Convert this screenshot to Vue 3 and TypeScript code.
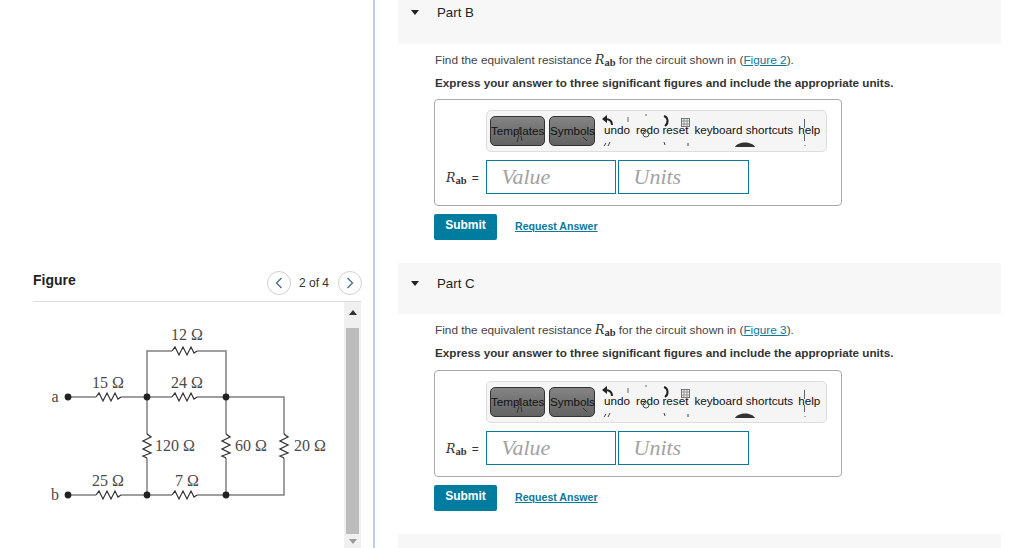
<script setup lang="ts">
interface Part {
  name: string
  figure: string
}
const parts: Part[] = [
  { name: 'Part B', figure: 'Figure 2' },
  { name: 'Part C', figure: 'Figure 3' },
]
const wires: string[] = [
  'M68 397H96M121 397H172M197 397H284V434M284 458V495H226',
  'M147 397V351H172M197 351H226V397',
  'M147 397V434M147 458V495',
  'M226 397V434M226 458V495',
  'M68 495H96M121 495H172M197 495H226',
]
const hResistors: [number, number][] = [[96, 397], [172, 397], [172, 351], [96, 495], [172, 495]]
const vResistors: [number, number][] = [[147, 434], [226, 434], [284, 434]]
const nodes: [number, number][] = [[68, 397], [147, 397], [226, 397], [68, 495], [147, 495], [226, 495]]
const labels: [string, number, number][] = [
  ['12 Ω', 187, 340], ['15 Ω', 108, 388], ['24 Ω', 187, 388],
  ['120 Ω', 175, 451], ['60 Ω', 251, 451], ['20 Ω', 310, 451],
  ['25 Ω', 108, 486], ['7 Ω', 187, 486],
]
</script>

<template>
  <div class="page">
    <aside class="left">
      <div class="figure-head">
        <strong class="figure-title">Figure</strong>
        <div class="pager">
          <button class="round"><svg width="10" height="12" viewBox="0 0 10 12"><path d="M7.5 1 2.5 6l5 5" fill="none" stroke="#4a6a8a" stroke-width="1.3" /></svg></button>
          <span class="count">2 of 4</span>
          <button class="round"><svg width="10" height="12" viewBox="0 0 10 12"><path d="M2.5 1l5 5-5 5" fill="none" stroke="#4a6a8a" stroke-width="1.3" /></svg></button>
        </div>
      </div>
      <div class="viewer">
        <svg class="circuit" width="311" height="246" viewBox="33 302 311 246">
          <path v-for="w in wires" :key="w" :d="w" fill="none" stroke="#808080" stroke-width="1.5" />
          <path v-for="r in hResistors" :key="r.join()" :transform="`translate(${r[0]} ${r[1]})`" d="M0 0 3 -4 7 4 11 -4 15 4 19 -4 22 2 25 0" fill="none" stroke="#333" stroke-width="1.2" />
          <path v-for="r in vResistors" :key="r.join()" :transform="`translate(${r[0]} ${r[1]})`" d="M0 0 4 3 -4 7 4 11 -4 15 4 19 -4 22 0 24" fill="none" stroke="#333" stroke-width="1.3" />
          <circle v-for="n in nodes" :key="n.join()" :cx="n[0]" :cy="n[1]" r="3.4" fill="#222" />
          <text v-for="l in labels" :key="l[0]" :x="l[1]" :y="l[2]" class="ctext" text-anchor="middle">{{ l[0] }}</text>
          <text x="55" y="402" class="ctext" text-anchor="middle">a</text>
          <text x="55" y="500" class="ctext" text-anchor="middle">b</text>
        </svg>
        <div class="track">
          <span class="up"></span>
          <div class="thumb"></div>
          <span class="down"></span>
        </div>
      </div>
    </aside>

    <main class="right">
      <section v-for="p in parts" :key="p.name" class="part">
        <header class="part-head">
          <span class="caret"></span>
          <span class="part-name">{{ p.name }}</span>
        </header>
        <div class="part-body">
          <p class="question">Find the equivalent resistance <span class="math"><i>R</i><sub>ab</sub></span> for the circuit shown in (<a class="flink">{{ p.figure }}</a>).</p>
          <p class="instr">Express your answer to three significant figures and include the appropriate units.</p>
          <div class="answer">
            <div class="toolbar">
              <button class="tbtn templates">Templates</button>
              <button class="tbtn symbols">Symbols</button>
              <span class="tool undo">undo</span>
              <span class="tool redo">redo</span>
              <span class="tool reset">reset</span>
              <span class="tool keys">keyboard shortcuts</span>
              <span class="tool help">help</span>
              <svg class="bits" width="341" height="42" viewBox="486 110 341 42">
                <path d="M520 127l-2 7M516 131l6 4M519 135l-2 7M521 136l1 5" fill="none" stroke="#333" stroke-width="1" />
                <path d="M583 137l4 4" fill="none" stroke="#333" stroke-width="1" />
                <path d="M612 125c0-4-2-6-7-6" fill="none" stroke="#222" stroke-width="2" />
                <path d="M602 119l5-4v8z" fill="#222" />
                <path d="M628 117v5M645 115h2" fill="none" stroke="#666" stroke-width="1" />
                <path d="M664 116c4 1 5 7 1 10" fill="none" stroke="#222" stroke-width="2" />
                <rect x="681.500" y="118.500" width="8" height="8" fill="#eee" stroke="#777" />
                <path d="M681 121h9M681 124h9M684 118v8M687 118v8" stroke="#777" stroke-width=".7" />
                <circle cx="646" cy="134" r="3" fill="none" stroke="#555" />
                <path d="M604 146l2-3M608 146l2-4" stroke="#444" fill="none" />
                <path d="M735 147c3-6 17-6 20 0z" fill="#333" />
                <path d="M664 142l1 3M688 143v3" stroke="#444" fill="none" />
                <path d="M804.500 119v9M804.500 134v7M805 145v1" stroke="#666" fill="none" />
              </svg>
            </div>
            <div class="answer-row">
              <span class="rab"><span class="math"><i>R</i><sub>ab</sub></span> =</span>
              <div class="field value">Value</div>
              <div class="field units">Units</div>
            </div>
          </div>
          <div class="actions">
            <button class="submit">Submit</button>
            <a class="request">Request Answer</a>
          </div>
        </div>
      </section>
      <div class="part-head next"></div>
    </main>
  </div>
</template>

<style>
html, body { margin: 0; background: #fff; }
</style>

<style scoped>
.page {
  display: flex;
  width: 1010px;
  height: 548px;
  overflow: hidden;
  font-family: "Liberation Sans", Arial, sans-serif;
  color: #333;
}
.left {
  width: 373px;
  height: 548px;
  border-right: 2px solid #bdd0e2;
  flex: none;
}
.figure-head {
  display: flex;
  align-items: center;
  justify-content: space-between;
  width: 328px;
  height: 36px;
  margin: 265px 0 0 33px;
  border-bottom: 1px solid #ddd;
}
.figure-title { font-size: 14px; color: #222; margin-bottom: 6px; }
.pager { display: flex; align-items: center; gap: 8px; margin-right: -1px; }
.count { font-size: 12px; color: #333; margin-right: 1px; }
.round {
  width: 24px;
  height: 24px;
  padding: 0;
  display: flex;
  align-items: center;
  justify-content: center;
  border: 1px solid #d0d0d0;
  border-radius: 50%;
  background: #fff;
}
.viewer { display: flex; width: 328px; margin-left: 33px; }
.circuit { flex: none; width: 311px; height: 246px; }
.ctext { font-family: "Liberation Serif", serif; font-size: 16px; fill: #4a4a4a; }
.track {
  width: 17px;
  height: 246px;
  flex: none;
  background: #f0f0f0;
  display: flex;
  flex-direction: column;
  align-items: center;
}
.up { margin-top: 8px; border: 4px solid transparent; border-top: 0; border-bottom: 5px solid #333; }
.thumb { width: 13px; height: 206px; margin-top: 13px; background: #bcbcbc; }
.down { margin-top: 5px; border: 4px solid transparent; border-bottom: 0; border-top: 5px solid #999; }
.right { flex: none; width: 603px; margin: -8px 0 0 23px; }
.part { height: 271px; }
.part-head {
  height: 52px;
  background: #f7f7f7;
  display: flex;
  align-items: flex-start;
  padding-top: 12px;
  box-sizing: border-box;
}
.part:nth-of-type(2) .part-head { height: 51px; }
.part:nth-of-type(2) .answer { margin-top: 9px; }
.caret {
  margin: 6px 0 0 13px;
  border: 4.5px solid transparent;
  border-bottom: 0;
  border-top: 5px solid #222;
}
.part-name { margin: 1px 0 0 18px; font-size: 13.300px; line-height: 16px; color: #222; }
.part-body { padding: 8px 0 0 36px; }
.question { margin: 0 0 0 1px; font-size: 11.800px; line-height: 16px; height: 23px; color: #444; white-space: nowrap; }
.instr { margin: 0 0 0 1px; font-size: 11.700px; line-height: 16px; font-weight: 700; color: #333; white-space: nowrap; }
.math { font-family: "DejaVu Serif", serif; font-size: 12.500px; color: #333; }
.math sub { font-size: 10.500px; font-weight: 700; line-height: 0; font-family: "Liberation Serif", serif; vertical-align: -2px; }
.flink { color: #0a7a9c; text-decoration: underline; }
.answer {
  position: relative;
  box-sizing: border-box;
  width: 408px;
  height: 107px;
  margin-top: 8px;
  border: 1px solid #aaa;
  border-radius: 4px;
}
.toolbar {
  position: absolute;
  left: 51px;
  top: 10px;
  box-sizing: border-box;
  width: 341px;
  height: 42px;
  background: #f5f5f5;
  border: 1px solid #ddd;
  border-radius: 5px;
  display: flex;
  align-items: center;
  font-size: 11.700px;
  color: #111;
  white-space: nowrap;
}
.bits { position: absolute; left: -1px; top: -1px; z-index: 1; }
.tbtn {
  box-sizing: border-box;
  height: 30px;
  padding: 0 0 2px;
  border: 1px solid #333;
  border-radius: 5px;
  background: linear-gradient(#848484, #626262);
  font: 11.700px "Liberation Sans", Arial, sans-serif;
  color: #111;
  flex: none;
}
.templates { width: 55px; margin-left: 3px; }
.symbols { width: 46px; margin-left: 4px; }
.tool { flex: none; margin-bottom: 3px; }
.undo { margin-left: 9px; }
.redo { margin-left: 6px; }
.reset { margin-left: 3px; }
.keys { margin-left: 6px; }
.help { margin-left: 5px; }
.answer-row {
  position: absolute;
  left: 10px;
  top: 60px;
  display: flex;
  align-items: center;
}
.rab { width: 40px; padding-left: 1px; font-size: 12px; color: #333; white-space: nowrap; }
.rab .math { margin-right: 2px; }
.field {
  box-sizing: border-box;
  height: 34px;
  border: 1.5px solid #0a7a9c;
  font-family: "Liberation Serif", serif;
  font-style: italic;
  font-size: 22px;
  line-height: 31px;
  color: #a2a2a2;
  padding-left: 14.500px;
}
.value { width: 130px; }
.units { width: 131px; margin-left: 2px; }
.actions { display: flex; align-items: center; margin-top: 8px; }
.submit {
  width: 63px;
  height: 26px;
  padding: 0 0 4px;
  border: 0;
  border-radius: 2px;
  background: #007c9e;
  color: #fff;
  font: 700 12px "Liberation Sans", Arial, sans-serif;
}
.request { margin: 0 0 3px 18px; font-size: 10.600px; font-weight: 700; color: #0a7a9c; text-decoration: underline; }
.next { height: 30px; }
</style>
